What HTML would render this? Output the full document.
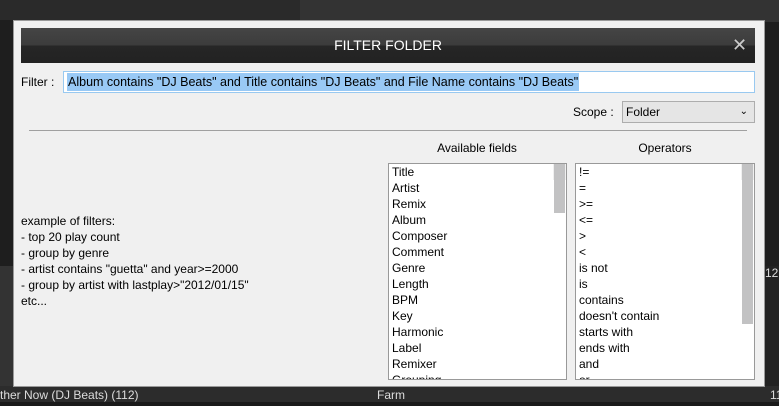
<!DOCTYPE html>
<html style="overflow:hidden"><head><style>
html,body{margin:0;overflow:hidden}
body{width:779px;height:406px;background:#1e1e1e;position:relative;font-family:"Liberation Sans",Arial,sans-serif;font-size:12px;color:#000}
.a{position:absolute}
.dlg{left:13px;top:20px;width:750px;height:365px;background:#f0f0f0;border:1px solid #999}
.title{left:21px;top:28px;width:734px;height:35px;background:linear-gradient(#454545 0,#3c3c3c 17px,#262626 18px,#222 35px);color:#fff;font-size:14px;text-align:center;line-height:35px}
.list{background:#fff;border:1px solid #999;overflow:hidden}
.list div{height:16px;line-height:16px;padding-left:3px;font-size:12px}
.sb{position:absolute;top:0;right:0;width:10px;height:100%;background:#f0f0f0}
.th{position:absolute;top:0;left:1px;width:8px;background:#c2c2c3}
.row{left:0;width:779px;height:18px;color:#ddd;line-height:18px;font-size:12px}
</style></head><body>
<div class="a" style="left:0;top:0;width:779px;height:20px;background:#2a2a2a"></div>
<div class="a" style="left:300px;top:0;width:560px;height:22px;background:#333"></div>
<div class="a row" style="top:386px;background:#2c2c2c"><span class="a" style="left:0">ther Now (DJ Beats) (112)</span><span class="a" style="left:377px">Farm</span><span class="a" style="left:770px">11</span></div>
<div class="a" style="left:0;top:402px;width:779px;height:4px;background:#1a1a1a"></div>
<div class="a" style="left:0;top:266px;width:13px;height:120px;background:#333"></div>
<div class="a" style="left:765px;top:266px;width:14px;height:120px;background:#222;color:#ddd">12</div>
<div class="a dlg"></div>
<div class="a title">FILTER FOLDER</div>
<div class="a" style="left:732px;top:35px;color:#ccc;font-size:18px">✕</div>
<div class="a" style="left:21px;top:75px">Filter :</div>
<div class="a" style="left:63px;top:71px;width:690px;height:20px;background:#fff;border:1px solid #99c9f0"></div>
<div class="a" style="left:65px;top:73px;height:18px;line-height:18px;background:#99c9f5;padding:0 1px;font-size:12.5px;border-left:2px solid #fff">Album contains "DJ Beats" and Title contains "DJ Beats" and File Name contains "DJ Beats"</div>
<div class="a" style="left:573px;top:105px">Scope :</div>
<div class="a" style="left:622px;top:101px;width:131px;height:20px;background:#e5e5e5;border:1px solid #adadad;line-height:20px"><span style="padding-left:3px">Folder</span><span style="position:absolute;right:6px;top:0;font-size:10px">&#x2304;</span></div>
<div class="a" style="left:29px;top:130px;width:718px;height:1px;background:#a0a0a0"></div>
<div class="a" style="left:388px;top:141px;width:178px;text-align:center">Available fields</div>
<div class="a" style="left:575px;top:141px;width:180px;text-align:center">Operators</div>
<div class="a list" style="left:388px;top:163px;width:177px;height:215px">
<div>Title</div><div>Artist</div><div>Remix</div><div>Album</div><div>Composer</div><div>Comment</div><div>Genre</div><div>Length</div><div>BPM</div><div>Key</div><div>Harmonic</div><div>Label</div><div>Remixer</div><div>Grouping</div>
<div class="sb"><div class="th" style="height:49px"></div></div></div>
<div class="a list" style="left:575px;top:163px;width:178px;height:215px">
<div>!=</div><div>=</div><div>&gt;=</div><div>&lt;=</div><div>&gt;</div><div>&lt;</div><div>is not</div><div>is</div><div>contains</div><div>doesn't contain</div><div>starts with</div><div>ends with</div><div>and</div><div>or</div>
<div class="sb"><div class="th" style="height:160px"></div></div></div>
<div class="a" style="left:21px;top:213px;line-height:16px">example of filters:<br>- top 20 play count<br>- group by genre<br>- artist contains "guetta" and year&gt;=2000<br>- group by artist with lastplay&gt;"2012/01/15"<br>etc...</div>
</body></html>
